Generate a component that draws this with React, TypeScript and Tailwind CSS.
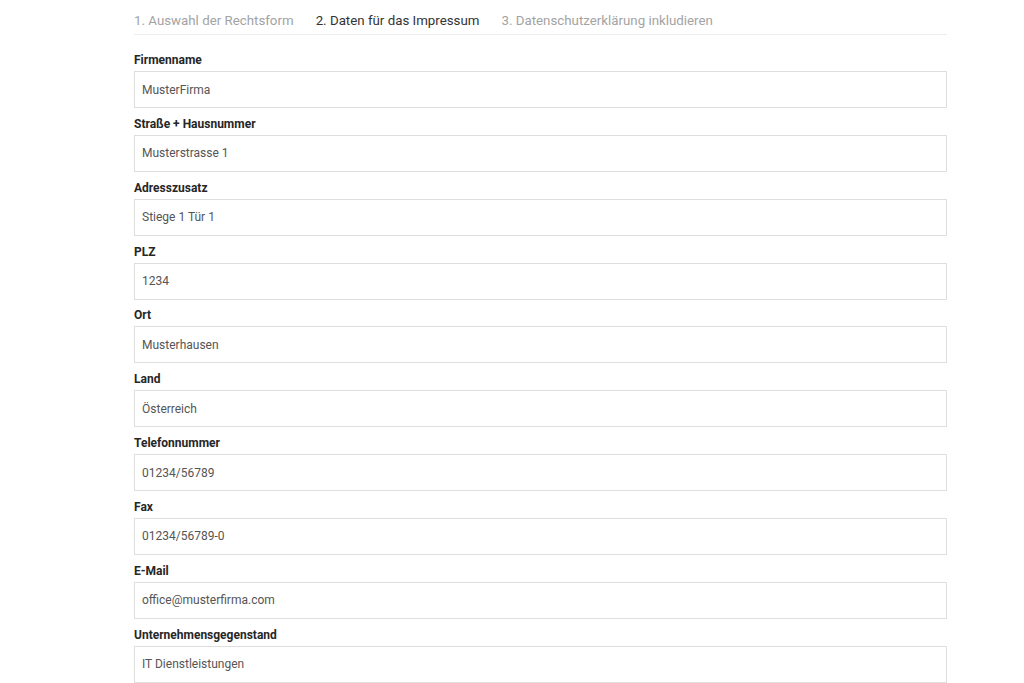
const fields = [
  { label: 'Firmenname', value: 'MusterFirma' },
  { label: 'Straße + Hausnummer', value: 'Musterstrasse 1' },
  { label: 'Adresszusatz', value: 'Stiege 1 Tür 1' },
  { label: 'PLZ', value: '1234' },
  { label: 'Ort', value: 'Musterhausen' },
  { label: 'Land', value: 'Österreich' },
  { label: 'Telefonnummer', value: '01234/56789' },
  { label: 'Fax', value: '01234/56789-0' },
  { label: 'E-Mail', value: 'office@musterfirma.com' },
  { label: 'Unternehmensgegenstand', value: 'IT Dienstleistungen' },
];

const steps = [
  { label: '1. Auswahl der Rechtsform', active: false },
  { label: '2. Daten für das Impressum', active: true },
  { label: '3. Datenschutzerklärung inkludieren', active: false },
];

export default function App() {
  return (
    <div className="min-h-screen bg-white font-['Roboto',sans-serif]">
      <div className="ml-[134px] w-[813px] pt-[12px]">
        <div className="flex gap-[22px] border-b border-[#ececec] pb-[4px] text-[13.3px] leading-[18px]">
          {steps.map((s) => (
            <span
              key={s.label}
              className={s.active ? 'text-[#333333]' : 'text-[#a3a3a3]'}
            >
              {s.label}
            </span>
          ))}
        </div>
        <div className="flex flex-col pt-[17px]">
          {fields.map((f) => (
            <div key={f.label} className="flex flex-col mb-[7.85px]">
              <label className="h-4 text-[12px] leading-4 font-bold text-[#262626]">
                {f.label}
              </label>
              <div className="mt-[3px] h-[37px] border border-[#dedede] flex items-center px-[7px] text-[12px] text-[#555555]">
                {f.value}
              </div>
            </div>
          ))}
        </div>
      </div>
    </div>
  );
}
